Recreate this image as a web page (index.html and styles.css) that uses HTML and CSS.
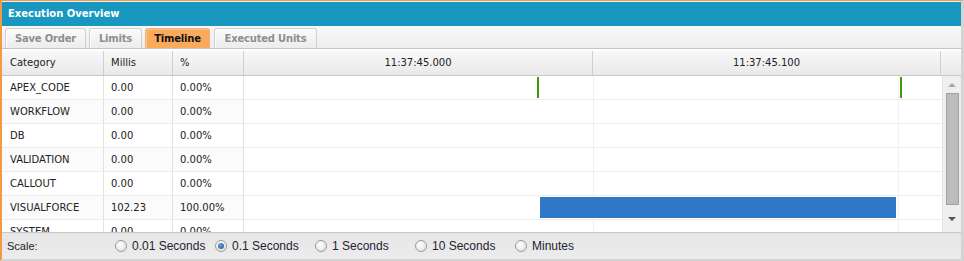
FILE: index.html
```html
<!DOCTYPE html>
<html>
<head>
<meta charset="utf-8">
<link rel="stylesheet" href="styles.css">
</head>
<body>
<div class="panel">
  <div class="title">Execution Overview</div>
  <div class="tabbar">
    <div class="tab w-save">Save Order</div>
    <div class="tab w-limits">Limits</div>
    <div class="tab w-timeline active">Timeline</div>
    <div class="tab w-units">Executed Units</div>
  </div>
  <div class="gap"></div>
  <div class="head">
    <div class="hc c1">Category</div>
    <div class="hc c2">Millis</div>
    <div class="hc c3">%</div>
    <div class="hc t1">11:37:45.000</div>
    <div class="hc t2">11:37:45.100</div>
    <div class="hc sb"></div>
  </div>
  <div class="body">
    <div class="rows">
      <div class="row">
        <div class="cell c1">APEX_CODE</div><div class="cell c2">0.00</div><div class="cell c3">0.00%</div>
        <div class="tl"><i class="gl a"></i><i class="gl b"></i><i class="mark" style="left:293px"></i><i class="mark" style="left:656px"></i></div>
      </div>
      <div class="row alt">
        <div class="cell c1">WORKFLOW</div><div class="cell c2">0.00</div><div class="cell c3">0.00%</div>
        <div class="tl"><i class="gl a"></i><i class="gl b"></i></div>
      </div>
      <div class="row">
        <div class="cell c1">DB</div><div class="cell c2">0.00</div><div class="cell c3">0.00%</div>
        <div class="tl"><i class="gl a"></i><i class="gl b"></i></div>
      </div>
      <div class="row alt">
        <div class="cell c1">VALIDATION</div><div class="cell c2">0.00</div><div class="cell c3">0.00%</div>
        <div class="tl"><i class="gl a"></i><i class="gl b"></i></div>
      </div>
      <div class="row">
        <div class="cell c1">CALLOUT</div><div class="cell c2">0.00</div><div class="cell c3">0.00%</div>
        <div class="tl"><i class="gl a"></i><i class="gl b"></i></div>
      </div>
      <div class="row alt">
        <div class="cell c1">VISUALFORCE</div><div class="cell c2">102.23</div><div class="cell c3">100.00%</div>
        <div class="tl"><i class="gl a"></i><i class="gl b"></i><i class="bar" style="left:296px;width:356px"></i></div>
      </div>
      <div class="row">
        <div class="cell c1">SYSTEM</div><div class="cell c2">0.00</div><div class="cell c3">0.00%</div>
        <div class="tl"><i class="gl a"></i><i class="gl b"></i></div>
      </div>
    </div>
    <div class="scroll">
      <div class="arrow up"></div>
      <div class="thumb"></div>
      <div class="arrow down"></div>
    </div>
  </div>
  <div class="footer">
    <div class="scale">Scale:</div>
    <div class="opt"><span class="radio"></span>0.01 Seconds</div>
    <div class="opt"><span class="radio on"></span>0.1 Seconds</div>
    <div class="opt"><span class="radio"></span>1 Seconds</div>
    <div class="opt"><span class="radio"></span>10 Seconds</div>
    <div class="opt"><span class="radio"></span>Minutes</div>
  </div>
</div>
</body>
</html>
```

FILE: styles.css
```css
* { box-sizing: border-box; margin: 0; padding: 0; }
body { margin: 0; background: #fff; }
.panel {
  width: 964px; height: 261px;
  border-top: 1px solid #f29a44;
  border-left: 2px solid #f29a44;
  border-right: 3px solid #d4d4d4;
  border-bottom: 2px solid #d4d4d4;
  display: flex; flex-direction: column;
  overflow: hidden;
  font-family: "DejaVu Sans", sans-serif;
  font-size: 10px;
  color: #222;
}
.title {
  height: 25px;
  border-top: 1px solid #e8f4f8;
  background: #1897c0;
  color: #fff;
  font-weight: bold;
  padding-left: 6px;
  line-height: 23px;
  flex: none;
}
.tabbar {
  height: 23px; flex: none;
  background: linear-gradient(#f8f8f8, #eeeeee);
  border-bottom: 1px solid #c6c6c6;
  display: flex; align-items: flex-end;
  padding-left: 3px; gap: 3px;
}
.tab {
  height: 20px;
  border: 1px solid #cfcfcf;
  border-bottom: none;
  border-radius: 3px 3px 0 0;
  background: linear-gradient(#fbfbfb, #ececec);
  box-shadow: inset 1px 1px 0 #fff;
  color: #8e8e8e;
  font-weight: bold;
  line-height: 19px;
  text-align: center;
  letter-spacing: -0.2px;
  white-space: nowrap;
}
.w-save { width: 81px; }
.w-limits { width: 53px; }
.w-timeline { width: 65px; margin-right: 1px; }
.w-units { width: 103px; }
.tab.active {
  background: #fba95b;
  border-color: #e9b27c;
  box-shadow: inset 1px 1px 0 #fdc58f;
  color: #111;
}
.gap { height: 2px; flex: none; background: #fff; }
.head {
  height: 25px; flex: none;
  display: flex;
  background: linear-gradient(#f8f8f8, #e9e9e9);
  border-bottom: 1px solid #c8c8c8;
}
.hc {
  border-right: 1px solid #cfcfcf;
  line-height: 24px;
  padding-left: 8px;
}
.c1 { width: 102px; }
.c2 { width: 69px; padding-left: 7px; }
.c3 { width: 71px; padding-left: 7px; }
.t1 { width: 349px; text-align: center; padding-left: 0; }
.t2 { width: 348px; text-align: center; padding-left: 0; }
.sb { width: 20px; border-right: none; padding: 0; }
.body {
  height: 156px; flex: none;
  display: flex;
  overflow: hidden;
}
.rows { width: 940px; }
.row {
  height: 24px;
  display: flex;
  border-bottom: 1px solid #ececec;
  background: #fff;
}
.row.alt { background: #fbfbfb; }
.cell {
  border-right: 1px solid #e2e2e2;
  line-height: 23px;
  padding-left: 8px;
}
.row .c2, .row .c3 { padding-left: 7px; }
.tl { position: relative; flex: 1; background: #fff; }
.gl { position: absolute; top: 0; bottom: -1px; width: 1px; background: #f0f0f0; }
.gl.a { left: 349px; }
.gl.b { left: 654px; }
.mark { position: absolute; top: 1px; width: 2px; height: 21px; background: #3c9a0e; }
.bar { position: absolute; top: 1px; height: 21px; background: #2f78c8; }
.scroll {
  width: 19px; flex: none;
  background: #efefef;
  border-left: 1px solid #e4e4e4;
  display: flex; flex-direction: column; align-items: center;
  padding-top: 7px;
}
.arrow { width: 0; height: 0; border-left: 4px solid transparent; border-right: 4px solid transparent; }
.arrow.up { border-bottom: 4px solid #a8a8a8; }
.arrow.down { border-top: 4px solid #555; margin-top: 12px; }
.thumb {
  width: 13px; height: 112px;
  margin-top: 6px;
  margin-left: 1px;
  background: #bcbcbc;
  border: 1px solid #a2a2a2;
}
.footer {
  flex: 1;
  display: flex; align-items: center;
  background: linear-gradient(#e6e6e6, #ececec);
  border-top: 1px solid #c8c8c8;
  font-family: "Liberation Sans", Arial, sans-serif;
  padding-bottom: 1px;
}
.scale { width: 113px; padding-left: 5px; font-size: 11px; color: #222; }
.opt {
  width: 100px;
  display: flex; align-items: center;
  font-size: 12px; color: #1e1e32;
}
.radio {
  width: 12px; height: 12px;
  border-radius: 50%;
  border: 1px solid #9a9a9a;
  background: radial-gradient(circle at 40% 35%, #ffffff, #dcdcdc);
  margin-right: 5px;
  position: relative;
  flex: none;
}
.radio.on::after {
  content: "";
  position: absolute; left: 2px; top: 2px;
  width: 6px; height: 6px; border-radius: 50%;
  background: radial-gradient(circle at 40% 35%, #6aa0d8, #1d4f8c);
}
```
